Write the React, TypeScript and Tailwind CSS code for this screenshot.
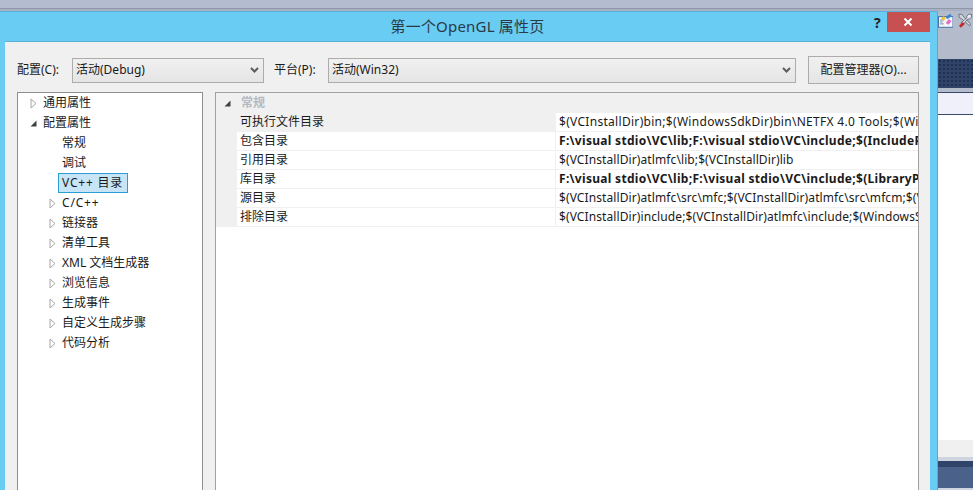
const FONT = "font-['Noto_Sans','Noto_Sans_CJK_SC',sans-serif]";

const menus = ["文件(F)", "编辑(E)", "视图(V)", "项目(P)", "生成(B)", "调试(D)", "团队(M)", "数据(A)", "工具(T)", "体系结构(C)", "测试(S)", "分析(N)", "窗口(W)", "帮助(H)"];

const tree: { label: string; level: number; arrow?: "open" | "closed"; selected?: boolean; wide?: boolean }[] = [
  { label: "通用属性", level: 0, arrow: "closed" },
  { label: "配置属性", level: 0, arrow: "open" },
  { label: "常规", level: 1 },
  { label: "调试", level: 1 },
  { label: "VC++ 目录", level: 1, selected: true, wide: true },
  { label: "C/C++", level: 1, arrow: "closed", wide: true },
  { label: "链接器", level: 1, arrow: "closed" },
  { label: "清单工具", level: 1, arrow: "closed" },
  { label: "XML 文档生成器", level: 1, arrow: "closed" },
  { label: "浏览信息", level: 1, arrow: "closed" },
  { label: "生成事件", level: 1, arrow: "closed" },
  { label: "自定义生成步骤", level: 1, arrow: "closed" },
  { label: "代码分析", level: 1, arrow: "closed" },
];

const rows = [
  { name: "可执行文件目录", value: "$(VCInstallDir)bin;$(WindowsSdkDir)bin\\NETFX 4.0 Tools;$(WindowsSdkDir)bin;$(VSInstallDir)", first: true, track: "tracking-[0.3px]" },
  { name: "包含目录", value: "F:\\visual stdio\\VC\\lib;F:\\visual stdio\\VC\\include;$(IncludePath)", bold: true, track: "tracking-[0.3px]" },
  { name: "引用目录", value: "$(VCInstallDir)atlmfc\\lib;$(VCInstallDir)lib", track: "tracking-[0.1px]" },
  { name: "库目录", value: "F:\\visual stdio\\VC\\lib;F:\\visual stdio\\VC\\include;$(LibraryPath)", bold: true, track: "tracking-[0.3px]" },
  { name: "源目录", value: "$(VCInstallDir)atlmfc\\src\\mfc;$(VCInstallDir)atlmfc\\src\\mfcm;$(VCInstallDir)", track: "tracking-[0.1px]" },
  { name: "排除目录", value: "$(VCInstallDir)include;$(VCInstallDir)atlmfc\\include;$(WindowsSdkDir)include", track: "tracking-[0.1px]" },
];

function Closed() {
  return (
    <svg width="7" height="11" viewBox="0 0 7 11" className="block">
      <path d="M1 1 L6 5.5 L1 10 Z" fill="#fff" stroke="#a6a6a6" strokeWidth="1" />
    </svg>
  );
}

function Open() {
  return (
    <svg width="7" height="7" viewBox="0 0 7 7" className="block">
      <path d="M6.5 0.5 L6.5 6.5 L0.5 6.5 Z" fill="#404040" />
    </svg>
  );
}

function Chevron() {
  return (
    <svg width="9" height="6" viewBox="0 0 9 6" className="block">
      <path d="M1 1 L4.5 4.5 L8 1" fill="none" stroke="#5c5c5c" strokeWidth="2" />
    </svg>
  );
}

function Select({ text, width }: { text: string; width: string }) {
  return (
    <div className={`${width} h-[25px] flex items-center justify-between px-[3px] border border-[#acacac] bg-gradient-to-b from-[#f0f0f0] to-[#e5e5e5] text-[12px] text-[#1a1a1a]`}>
      <span>{text}</span>
      <span className="mr-[1px]"><Chevron /></span>
    </div>
  );
}

function ToolbarIcons() {
  return (
    <div className="flex items-start gap-[5px] pt-[2px]">
      <svg width="16" height="15" viewBox="0 0 16 15" className="block">
        <rect x="0.5" y="3.5" width="15" height="11" fill="#f4f7fb" stroke="#3d6ea8" />
        <path d="M2 7h4M2 9h3M2 11h4" stroke="#7a8aa0" />
        <path d="M8 5 L10 2 L13 0.5 L14 3 L10 6Z" fill="#3f83cc" />
        <path d="M3 5 L6 3 L8 5 L6 8 Z" fill="#f2c230" />
        <path d="M8 10 L11 6 L14 8 L11 12 Z" fill="#e070c8" />
      </svg>
      <svg width="15" height="15" viewBox="0 0 15 15" className="block">
        <path d="M1 1 L4 1 L6 4 L13 11 L12 13 L4 6 L1 4 Z" fill="#d4d8de" stroke="#565d6a" strokeWidth="0.8" />
        <path d="M14 1 L11 1 L9 3 L9 5 L3 10 L5 12 L10 6 L12 6 L14 4 Z" fill="#e4e7ec" stroke="#565d6a" strokeWidth="0.8" />
        <path d="M1 13 L3 15 L7 11 L5 9 Z" fill="#c8262c" />
      </svg>
    </div>
  );
}

export default function App() {
  return (
    <div className={`${FONT} w-[973px] h-[490px] overflow-hidden flex flex-col bg-[#b4bccf]`}>
      <div className="h-[11px] shrink-0 overflow-hidden flex flex-col">
        <div className="h-[8px] shrink-0 overflow-hidden">
          <div className="flex gap-[16px] pl-[5px] -mt-[14px] text-[12px] leading-[16px] text-[#2a3040] whitespace-nowrap">
            {menus.map((m) => <span key={m}>{m}</span>)}
          </div>
        </div>
        <div className="h-[1px] bg-[#8f96a8]" />
        <div className="flex-1 bg-[#a9b1c4]" />
      </div>
      <div className="flex-1 flex min-h-0">
        <div className="w-[938px] shrink-0 flex flex-col bg-[#68ccf3] border-t border-r border-t-[#5ab0d8] border-r-[#55a9d2] pl-[5px] pr-[7px]">
          <div className="h-[29px] shrink-0 flex">
            <div className="flex-1 flex items-center justify-center pl-[59px] text-[15px] tracking-[0.2px] text-[#2b3a47]">
              <span>第一个OpenGL 属性页</span>
            </div>
            <div className="w-[59px] shrink-0 flex items-start">
              <span className="ml-[3px] mr-[6px] mt-[2px] font-bold text-[14px] text-[#222] leading-[18px]">?</span>
              <div className="w-[45px] h-[20px] bg-[#c75050] flex items-center justify-center">
                <svg width="10" height="10" viewBox="0 0 10 10" className="block">
                  <path d="M1.5 1.5 L8.5 8.5 M8.5 1.5 L1.5 8.5" stroke="#fff" strokeWidth="2" />
                </svg>
              </div>
            </div>
          </div>
          <div className="flex-1 min-h-0 bg-[#f0f0f0] border-t border-[#5ab0d8] pl-[12px] pr-[11px] flex flex-col">
            <div className="mt-[14px] h-[28px] shrink-0 flex items-center text-[12px] text-[#1a1a1a]">
              <span className="w-[55px]">配置(C):</span>
              <Select text="活动(Debug)" width="w-[192px]" />
              <span className="ml-[10px] w-[54px]">平台(P):</span>
              <Select text="活动(Win32)" width="w-[468px]" />
              <div className="ml-[12px] w-[111px] h-[28px] flex items-center justify-center border border-[#acacac] bg-gradient-to-b from-[#f0f0f0] to-[#e5e5e5]">
                配置管理器(O)...
              </div>
            </div>
            <div className="mt-[8px] flex-1 min-h-0 flex gap-[12px]">
              <div className="w-[186px] shrink-0 border border-[#8e8f8f] border-b-0 bg-white text-[12px] text-[#1a1a1a]">
                {tree.map((t) => (
                  <div key={t.label} className={`h-[20px] flex items-center ${t.level === 0 ? "pl-[12px]" : "pl-[31px]"}`}>
                    <span className="w-[13px] shrink-0 flex">
                      {t.arrow === "open" ? <Open /> : t.arrow === "closed" ? <Closed /> : null}
                    </span>
                    {t.selected ? (
                      <span className="-ml-[4px] h-[20px] w-[70px] pl-[3px] flex items-center bg-[#c7e5f6] border border-[#2a9fd6] tracking-[0.8px]">{t.label}</span>
                    ) : (
                      <span className={t.wide ? "tracking-[0.8px]" : ""}>{t.label}</span>
                    )}
                  </div>
                ))}
              </div>
              <div className="w-[704px] shrink-0 border border-[#a0a0a0] border-b-0 bg-white overflow-hidden text-[12px] text-[#1a1a1a]">
                <div className="h-[20px] bg-[#f0f0f0] flex items-center pl-[8px]">
                  <Open />
                  <span className="ml-[10px] font-bold text-[#b4b9c4]">常规</span>
                </div>
                {rows.map((r) => (
                  <div key={r.name} className="h-[19px] flex bg-[#f0f0f0]">
                    <div className="w-[21px] shrink-0" />
                    <div className={`w-[318px] shrink-0 flex items-center pl-[3px] border-b border-[#f0f0f0] ${r.first ? "bg-[#f0f0f0]" : "bg-white"}`}>
                      {r.name}
                    </div>
                    <div className={`ml-[1px] flex-1 min-w-0 overflow-hidden whitespace-nowrap flex items-center pl-[3px] bg-white border-b border-[#f0f0f0] ${r.track} ${r.bold ? "font-bold" : ""}`}>
                      {r.value}
                    </div>
                  </div>
                ))}
              </div>
            </div>
          </div>
        </div>
        <div className="flex-1 flex flex-col min-w-0">
          <div className="h-[48px] shrink-0 bg-[#b4bccb]">
            <ToolbarIcons />
          </div>
          <div className="h-[29px] shrink-0 bg-[#2f4468] bg-[radial-gradient(#1f3050_1px,transparent_1px)] bg-[length:4px_4px]" />
          <div className="h-[4px] shrink-0 bg-[#b4bccb]" />
          <div className="h-[23px] shrink-0 bg-[#f0f0fa] border-t border-b border-[#3a4a68]" />
          <div className="flex-1 bg-white" />
          <div className="h-[17px] shrink-0 bg-[#f0f0f0]" />
          <div className="h-[4px] shrink-0 bg-[#cfd5e0]" />
          <div className="h-[6px] shrink-0 bg-[#2f4468]" />
          <div className="h-[21px] shrink-0 bg-[#4a628a]" />
          <div className="h-[2px] shrink-0 bg-[#cfd5e0]" />
        </div>
      </div>
    </div>
  );
}
